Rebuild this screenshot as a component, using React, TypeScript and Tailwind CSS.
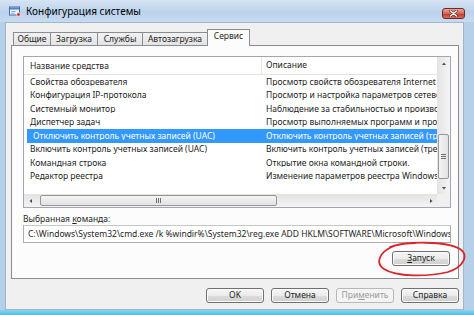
import React from "react";
import clsx from "clsx";

const tools: [string, string][] = [
  ["Свойства обозревателя", "Просмотр свойств обозревателя Internet Explorer"],
  ["Конфигурация IP-протокола", "Просмотр и настройка параметров сетевого протокола"],
  ["Системный монитор", "Наблюдение за стабильностью и производительностью"],
  ["Диспетчер задач", "Просмотр выполняемых программ и процессов"],
  ["Отключить контроль учетных записей (UAC)", "Отключить контроль учетных записей (требуется перезагрузка)"],
  ["Включить контроль учетных записей (UAC)", "Включить контроль учетных записей (требуется перезагрузка)"],
  ["Командная строка", "Открытие окна командной строки."],
  ["Редактор реестра", "Изменение параметров реестра Windows."],
];
const SELECTED = 4;

const tabs = [
  { label: "Общие", w: "w-[38px]" },
  { label: "Загрузка", w: "w-[48px]" },
  { label: "Службы", w: "w-[46px]" },
  { label: "Автозагрузка", w: "w-[66px]" },
];

function WinButton({
  children,
  disabled,
  className,
}: {
  children: React.ReactNode;
  disabled?: boolean;
  className?: string;
}) {
  return (
    <div
      className={clsx(
        "flex h-[15px] w-[58px] shrink-0 items-center justify-center rounded-[3px] border leading-none",
        disabled
          ? "border-[#b5b9bc] bg-[#f4f4f4] text-[#9a9a9a]"
          : "border-[#707070] bg-[linear-gradient(#f6f6f6,#ebebeb_50%,#dddddd_50%,#cfcfcf)] text-[#1e1e1e] shadow-[inset_0_0_0_1px_#fbfbfb]",
        className
      )}
    >
      {children}
    </div>
  );
}

function ScrollArrow({ dir }: { dir: "up" | "down" | "left" | "right" }) {
  const pts = {
    up: "2,5 4,2.5 6,5",
    down: "2,3 4,5.5 6,3",
    left: "5,2 2.5,4 5,6",
    right: "3,2 5.5,4 3,6",
  }[dir];
  return (
    <div className="flex h-[13px] w-[13px] shrink-0 items-center justify-center">
      <svg width="8" height="8" viewBox="0 0 8 8">
        <polygon points={pts} fill="#4d4d4d" />
      </svg>
    </div>
  );
}

function TitleIcon() {
  return (
    <svg width="12" height="11" viewBox="0 0 12 11" className="shrink-0">
      <rect x="0.5" y="1" width="10" height="8" fill="#e9f1fb" stroke="#3c6fb7" />
      <rect x="1" y="1.5" width="9" height="2" fill="#4c82cf" />
      <rect x="2.5" y="5" width="4" height="1" fill="#8aa9d6" />
      <rect x="2.5" y="6.8" width="3" height="1" fill="#8aa9d6" />
      <circle cx="9.5" cy="8.5" r="2" fill="#d04a3c" stroke="#ffffff" strokeWidth="0.6" />
    </svg>
  );
}

export default function App() {
  return (
    <div className="relative flex h-[315px] w-[474px] flex-col overflow-hidden bg-[#b6d0ea] font-['Noto_Sans',sans-serif] text-[8.5px] text-[#1e1e1e]">
      {/* title bar */}
      <div className="flex h-[22px] shrink-0 items-center bg-[linear-gradient(180deg,#d6e4f4,#bcd2eb_55%,#c7dbf0)] pl-[9px] pr-[9px]">
        <TitleIcon />
        <span className="ml-[5px] text-[10px] leading-none text-black">Конфигурация системы</span>
        <div className="ml-auto mt-[5px] flex h-[11px] w-[23px] items-center justify-center rounded-[3px] border border-[#6b2a28] bg-[linear-gradient(#e8a496,#d0685a_50%,#c0392b_55%,#d66f60)]">
          <svg width="9" height="7" viewBox="0 0 9 7">
            <path d="M1.5 1 L7.5 6 M7.5 1 L1.5 6" stroke="#5a1a14" strokeWidth="2.6" strokeLinecap="round" />
            <path d="M1.5 1 L7.5 6 M7.5 1 L1.5 6" stroke="#ffffff" strokeWidth="1.5" strokeLinecap="round" />
          </svg>
        </div>
      </div>

      {/* frame + client */}
      <div className="flex min-h-0 flex-1 pl-[5px] pr-[10px]">
        <div className="flex min-w-0 flex-1 flex-col overflow-hidden border border-[#9fb6d0] bg-[#f0f0f0]">
          {/* tabs */}
          <div className="ml-[7px] mt-[5px] flex h-[17px] shrink-0 items-end">
            {tabs.map((t, i) => (
              <div
                key={t.label}
                className={clsx(
                  "flex h-[13px] items-center justify-center border border-b-0 border-[#898c95] bg-[linear-gradient(#f2f2f2,#e3e3e3)] leading-none",
                  t.w,
                  i > 0 && "-ml-px"
                )}
              >
                {t.label}
              </div>
            ))}
            <div className="relative z-10 -mb-px -ml-px flex h-[17px] w-[43px] items-start justify-center border border-b-0 border-[#898c95] bg-[#fcfcfc] pt-[2px] leading-none">
              Сервис
            </div>
          </div>

          {/* tab panel */}
          <div className="ml-[5px] mr-[4px] flex h-[234px] min-w-0 shrink-0 flex-col overflow-hidden border border-[#898c95] bg-[#fcfcfc] pl-[11px] pr-[7px] pt-[10px]">
            {/* list view */}
            <div className="grid h-[152px] shrink-0 grid-cols-[minmax(0,1fr)_13px] grid-rows-[minmax(0,1fr)_13px] border border-[#a3a6ad] bg-white">
              <div className="flex min-w-0 flex-col overflow-hidden">
                <div className="flex h-[18px] shrink-0 items-center border-b border-[#e5e5e5] whitespace-nowrap">
                  <div className="w-[238px] shrink-0 border-r border-[#e5e5e5] pl-[6px] leading-[17px]">Название средства</div>
                  <div className="pl-[4px]">Описание</div>
                </div>
                {tools.map(([name, desc], i) => (
                  <div
                    key={name}
                    className={clsx(
                      "flex h-[13.5px] shrink-0 items-center whitespace-nowrap leading-none",
                      i === SELECTED && "ml-[3px] bg-[#3399ff] text-white"
                    )}
                  >
                    <div className={clsx("shrink-0 overflow-hidden pl-[6px]", i === SELECTED ? "w-[235px] pl-[3px]" : "w-[238px]")}>{name}</div>
                    <div className="min-w-0 flex-1 overflow-hidden pl-[4px]">{desc}</div>
                  </div>
                ))}
              </div>
              {/* vertical scrollbar */}
              <div className="flex flex-col bg-[linear-gradient(90deg,#e3e3e3,#f4f4f4)]">
                <ScrollArrow dir="up" />
                <div className="h-[64px] shrink-0" />
                <div className="mx-[1px] flex h-[45px] shrink-0 items-center justify-center rounded-[2px] border border-[#979797] bg-[linear-gradient(90deg,#f4f4f4,#e2e2e2)]">
                  <div className="flex flex-col gap-[1px]">
                    <div className="h-px w-[5px] bg-[#6f6f6f]" />
                    <div className="h-px w-[5px] bg-[#6f6f6f]" />
                    <div className="h-px w-[5px] bg-[#6f6f6f]" />
                  </div>
                </div>
                <div className="flex-1" />
                <ScrollArrow dir="down" />
              </div>
              {/* horizontal scrollbar */}
              <div className="flex min-w-0 items-center bg-[linear-gradient(#e3e3e3,#f4f4f4)]">
                <ScrollArrow dir="left" />
                <div className="ml-[3px] flex h-[11px] w-[237px] shrink-0 items-center justify-center rounded-[2px] border border-[#979797] bg-[linear-gradient(#f4f4f4,#e2e2e2)]">
                  <div className="flex gap-[1px]">
                    <div className="h-[5px] w-px bg-[#6f6f6f]" />
                    <div className="h-[5px] w-px bg-[#6f6f6f]" />
                    <div className="h-[5px] w-px bg-[#6f6f6f]" />
                  </div>
                </div>
                <div className="flex-1" />
                <ScrollArrow dir="right" />
              </div>
              <div className="bg-[#f0f0f0]" />
            </div>

            <div className="mt-[5px] h-[12px] shrink-0 leading-[12px]">
              Выбранная <span className="underline">к</span>оманда:
            </div>
            <div className="flex h-[18px] min-w-0 shrink-0 items-center overflow-hidden whitespace-nowrap border border-[#abadb3] border-t-[#c5c6c8] bg-white pl-[4px]">
              C:\Windows\System32\cmd.exe /k %windir%\System32\reg.exe ADD HKLM\SOFTWARE\Microsoft\Windows\CurrentVersion\Policies\System /v EnableLUA /t REG_DWORD /d 0 /f
            </div>
            <WinButton className="mr-[1px] mt-[8px] self-end">
              <span className="underline">З</span>апуск
            </WinButton>
          </div>

          {/* dialog buttons */}
          <div className="mr-[4px] mt-[9px] flex shrink-0 justify-end gap-[7px]">
            <WinButton>OK</WinButton>
            <WinButton>Отмена</WinButton>
            <WinButton disabled>
              При<span className="underline">м</span>енить
            </WinButton>
            <WinButton>Справка</WinButton>
          </div>
        </div>
      </div>
      <div className="h-[5px] shrink-0 bg-[linear-gradient(#8ed3ee,#4cbfe6)]" />

      {/* red highlight drawn over the screenshot */}
      <svg className="pointer-events-none absolute left-[376px] top-[240px]" width="92" height="38" viewBox="0 0 92 38">
        <path
          d="M14 7 C30 1 70 1 84 9 C93 15 88 27 72 32 C52 37 20 37 8 29 C-1 23 3 12 18 6 C26 3 34 3 40 3"
          fill="none"
          stroke="#d9262b"
          strokeWidth="1.8"
          strokeLinecap="round"
        />
      </svg>
    </div>
  );
}
